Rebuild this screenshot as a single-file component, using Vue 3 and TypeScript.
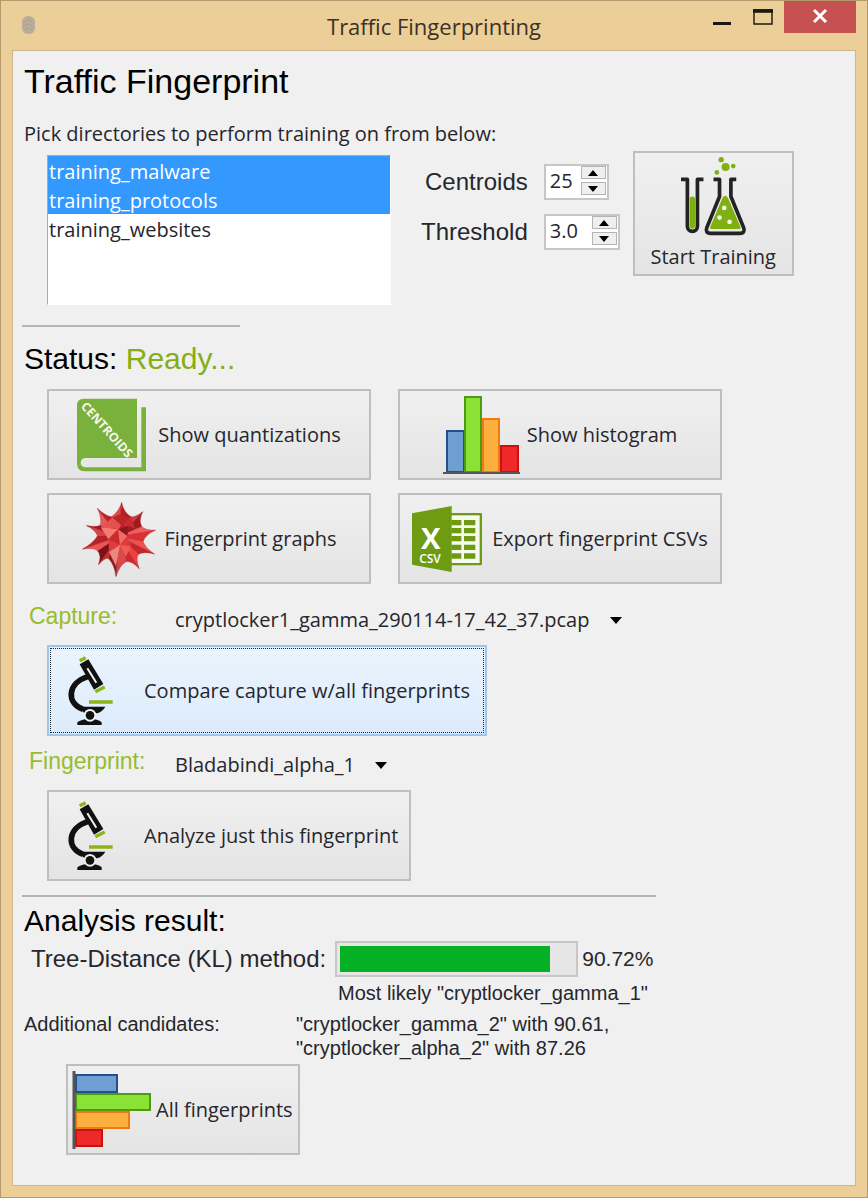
<script setup lang="ts">
import { ref } from 'vue'

interface Point { x: number; y: number }
interface Facet { d: string; fill: string }

const directories = ['training_malware', 'training_protocols', 'training_websites']
const selected = ref<string[]>(['training_malware', 'training_protocols'])
const centroids = ref(25)
const threshold = ref('3.0')
const captures = ['cryptlocker1_gamma_290114-17_42_37.pcap']
const capture = ref(captures[0])
const fingerprints = ['Bladabindi_alpha_1']
const fingerprint = ref(fingerprints[0])
const score = 90.72
const barFill = ref(90)

function stepCentroids(delta: number) {
  centroids.value = Math.max(1, Number(centroids.value) + delta)
}
function stepThreshold(delta: number) {
  threshold.value = Math.max(0, Number(threshold.value) + delta).toFixed(1)
}

// Spiked ball: every spike is a lit and a shaded half that narrow towards the tip.
const toPoints = (raw: number[][]): Point[] => raw.map(([x, y]) => ({ x, y }))
const hub: Point = { x: 115, y: 110 }
const tips = toPoints([[123, 7], [187, 35], [225, 91], [222, 163], [176, 207], [106, 231], [53, 195], [5, 148], [17, 77], [50, 25]])
const valleys = toPoints([[151, 50], [184, 80], [188, 125], [174, 164], [137, 186], [82, 176], [50, 153], [50, 108], [58, 76], [92, 50]])
const light = ['#e04845', '#d8393a', '#f0605c', '#ef5350', '#f0413f', '#d94a48', '#c92c2e', '#ee5552', '#d94142', '#e65a58']
const dark = ['#b41d22', '#9e1a1e', '#dc3034', '#c4262a', '#d0282c', '#8f1a1e', '#7c1014', '#b82226', '#a3181d', '#b52226']
const mix = (a: Point, b: Point, t: number): Point => ({ x: a.x + (b.x - a.x) * t, y: a.y + (b.y - a.y) * t })
const curve = (valley: Point, tip: Point): Point => mix(mix(valley, tip, 0.4), mix(hub, tip, 0.65), 0.5)
const facets: Facet[] = tips.flatMap((tip, i) => {
  const before = valleys[(i + valleys.length - 1) % valleys.length]
  const after = valleys[i]
  const a = curve(before, tip)
  const b = curve(after, tip)
  return [
    { d: `M${hub.x} ${hub.y}L${before.x} ${before.y}Q${a.x} ${a.y} ${tip.x} ${tip.y}Z`, fill: light[i] },
    { d: `M${hub.x} ${hub.y}L${after.x} ${after.y}Q${b.x} ${b.y} ${tip.x} ${tip.y}Z`, fill: dark[i] },
  ]
})
</script>

<template>
  <div class="window">
    <header class="titlebar">
      <svg class="app-icon" viewBox="0 0 14 20" aria-hidden="true">
        <rect x="0" y="1" width="13" height="18" rx="6" fill="#b8ad98" />
        <path d="M3 7q4-4 7 0M3 11q4-4 7 0M3 15q4-4 7 0" fill="none" stroke="#a89f8e" />
      </svg>
      <span class="title">Traffic Fingerprinting</span>
      <div class="controls">
        <button type="button" class="control" aria-label="Minimize">
          <svg width="20" height="18" viewBox="0 0 20 18"><path d="M1 15.5h18" stroke="#1c1812" stroke-width="3" /></svg>
        </button>
        <button type="button" class="control" aria-label="Maximize">
          <svg width="20" height="18" viewBox="0 0 20 18"><path d="M1 2h18v14H1z" fill="none" stroke="#1c1812" stroke-width="1.4" /><path d="M0 3h20" stroke="#1c1812" stroke-width="3.6" /></svg>
        </button>
        <button type="button" class="close" aria-label="Close">
          <svg width="16" height="14" viewBox="0 0 16 14"><path d="M2 1l12 12M14 1L2 13" stroke="#fff" stroke-width="3" /></svg>
        </button>
      </div>
    </header>

    <main class="client">
      <h1>Traffic Fingerprint</h1>
      <label class="hint" for="dirs">Pick directories to perform training on from below:</label>

      <section class="training">
        <select id="dirs" v-model="selected" class="dirs" multiple size="5">
          <option v-for="d in directories" :key="d" :value="d">{{ d }}</option>
        </select>
        <div class="params">
          <label for="centroids">Centroids</label>
          <div class="spin">
            <input id="centroids" v-model="centroids" class="narrow" type="text" inputmode="numeric" />
            <div class="arrows">
              <button type="button" aria-label="Increase centroids" @click="stepCentroids(1)"><svg width="10" height="6" viewBox="0 0 10 6"><path d="M0 6L5 0l5 6z" /></svg></button>
              <button type="button" aria-label="Decrease centroids" @click="stepCentroids(-1)"><svg width="10" height="6" viewBox="0 0 10 6"><path d="M0 0l5 6 5-6z" /></svg></button>
            </div>
          </div>
          <label for="threshold">Threshold</label>
          <div class="spin">
            <input id="threshold" v-model="threshold" class="wide" type="text" inputmode="decimal" />
            <div class="arrows">
              <button type="button" aria-label="Increase threshold" @click="stepThreshold(0.1)"><svg width="10" height="6" viewBox="0 0 10 6"><path d="M0 6L5 0l5 6z" /></svg></button>
              <button type="button" aria-label="Decrease threshold" @click="stepThreshold(-0.1)"><svg width="10" height="6" viewBox="0 0 10 6"><path d="M0 0l5 6 5-6z" /></svg></button>
            </div>
          </div>
        </div>
        <button type="button" class="btn start">
          <svg width="67" height="79" viewBox="0 0 200 236" aria-hidden="true">
            <g fill="none" stroke="#232323" stroke-width="11" stroke-linejoin="round">
              <path d="M3 67H22V207a15 15 0 0 0 30 0V67H70" />
              <path d="M100 67H118V118L80 211Q74 228 92 228H178Q196 228 190 211L152 118V67H168" />
            </g>
            <path d="M29 126a8 8 0 0 1 16 0V206a8 8 0 0 1-16 0z" fill="#7fb010" />
            <path d="M135 116q6 0 9 8L181 210q2 5-4 5H94q-6 0-4-5L126 124q3-8 9-8z" fill="#7fb010" />
            <g fill="#f1f1f1"><circle cx="132" cy="152" r="7" /><circle cx="118" cy="181" r="7" /><circle cx="148" cy="194" r="7" /></g>
            <g fill="#7fb010"><circle cx="123" cy="8" r="8" /><circle cx="136" cy="30" r="12" /><circle cx="159" cy="27" r="7" /><circle cx="110" cy="46" r="7" /></g>
          </svg>
          <span>Start Training</span>
        </button>
      </section>

      <hr class="short" />
      <h2>Status: <span class="ready">Ready...</span></h2>

      <section class="grid">
        <button type="button" class="btn">
          <svg class="book" width="70" height="74" viewBox="0 0 210 222" aria-hidden="true">
            <path d="M20 2H180V180H25a14 14 0 0 0 0 28H193V28H207V220H22Q0 220 0 196V22Q0 2 20 2Z" fill="#79b13c" />
            <text transform="translate(10 26) rotate(48)" font-family="Open Sans, sans-serif" font-weight="700" font-size="37" fill="#f4f8ee">CENTROIDS</text>
          </svg>
          <span>Show quantizations</span>
        </button>
        <button type="button" class="btn">
          <svg class="chart" width="77" height="78" viewBox="0 0 77 78" aria-hidden="true">
            <g stroke-width="2">
              <rect x="4" y="35" width="17" height="41" fill="#6f9fd2" stroke="#244f8c" />
              <rect x="22" y="1" width="16" height="75" fill="#8ae234" stroke="#4e9a16" />
              <rect x="40" y="23" width="16" height="53" fill="#fcaf3e" stroke="#f07a10" />
              <rect x="58" y="50" width="17" height="26" fill="#ef2929" stroke="#cc1010" />
            </g>
            <path d="M0 77h77" stroke="#555" stroke-width="2" />
          </svg>
          <span>Show histogram</span>
        </button>
        <button type="button" class="btn">
          <svg class="star" width="76" height="78" viewBox="0 0 230 235" aria-hidden="true">
            <path v-for="f in facets" :key="f.d" :d="f.d" :fill="f.fill" stroke="#a3222a" stroke-width="1" />
            <polygon points="112,88 144,77 140,108 152,140 118,135 85,157 83,118 60,82 90,84" fill="#df3b3b" />
            <polygon points="112,88 60,82 83,118" fill="#f37b76" />
            <polygon points="112,88 83,118 118,135" fill="#c62b2e" />
            <polygon points="112,88 140,108 118,135" fill="#f06a66" />
            <polygon points="112,88 144,77 140,108" fill="#8d181c" />
            <polygon points="118,135 85,157 106,200" fill="#f08580" />
            <polygon points="118,135 152,140 135,172" fill="#f25a56" />
            <polygon points="95,53 120,42 145,56 122,76" fill="#b8262a" />
            <polygon points="64,77 95,53 122,76 112,88" fill="#e4514f" />
            <polygon points="150,50 165,88 144,77 122,76" fill="#cc2b2e" />
          </svg>
          <span>Fingerprint graphs</span>
        </button>
        <button type="button" class="btn">
          <svg class="csv" width="70" height="66" viewBox="0 0 210 198" aria-hidden="true">
            <rect x="110" y="21" width="100" height="157" rx="4" fill="#6d9b12" />
            <rect x="110" y="28" width="93" height="143" fill="#f7faf0" />
            <g fill="#6d9b12">
              <path d="M118 42h30v16h-30zM118 66h30v16h-30zM118 90h30v16h-30zM118 116h30v16h-30zM118 142h30v16h-30z" />
              <path d="M156 42h34v16h-34zM156 66h34v16h-34zM156 90h34v16h-34zM156 116h34v16h-34zM156 142h34v16h-34z" />
              <path d="M0 22L119 0V198L0 176Z" />
            </g>
            <text x="56" y="128" text-anchor="middle" font-family="Open Sans, sans-serif" font-weight="700" font-size="88" fill="#fff">X</text>
            <text x="54" y="171" text-anchor="middle" font-family="Open Sans, sans-serif" font-weight="600" font-size="36" fill="#fff">CSV</text>
          </svg>
          <span>Export fingerprint CSVs</span>
        </button>
      </section>

      <div class="field">
        <label for="capture">Capture:</label>
        <div class="combo">
          <select id="capture" v-model="capture"><option v-for="c in captures" :key="c">{{ c }}</option></select>
          <svg width="12" height="7" viewBox="0 0 12 7" aria-hidden="true"><path d="M0 0h12L6 7z" /></svg>
        </div>
      </div>
      <button type="button" class="btn scope focused">
        <svg width="44" height="69" viewBox="0 0 132 207" aria-hidden="true">
          <path d="M56 62C-6 82 -8 142 42 160" fill="none" stroke="#111" stroke-width="17" />
          <path d="M32 25L58 10 103 84 75 101Z" fill="#111" />
          <path d="M55 37L82 80" stroke="#f2f2f2" stroke-width="6" />
          <path d="M32 14L50 5M79 107L107 93M60 138H131" stroke="#8cb51a" stroke-width="10" />
          <path d="M28 152H109Q100 168 84 172H46Z" fill="#111" />
          <path d="M25 207V199Q40 188 62 188Q86 188 98 199V207Z" fill="#111" />
          <circle cx="63" cy="178" r="19" fill="#f0f3f5" /><circle cx="63" cy="178" r="13" fill="#111" />
        </svg>
        <span>Compare capture w/all fingerprints</span>
      </button>

      <div class="field after">
        <label for="fingerprint">Fingerprint:</label>
        <div class="combo">
          <select id="fingerprint" v-model="fingerprint"><option v-for="f in fingerprints" :key="f">{{ f }}</option></select>
          <svg width="12" height="7" viewBox="0 0 12 7" aria-hidden="true"><path d="M0 0h12L6 7z" /></svg>
        </div>
      </div>
      <button type="button" class="btn scope">
        <svg width="44" height="69" viewBox="0 0 132 207" aria-hidden="true">
          <path d="M56 62C-6 82 -8 142 42 160" fill="none" stroke="#111" stroke-width="17" />
          <path d="M32 25L58 10 103 84 75 101Z" fill="#111" />
          <path d="M55 37L82 80" stroke="#f2f2f2" stroke-width="6" />
          <path d="M32 14L50 5M79 107L107 93M60 138H131" stroke="#8cb51a" stroke-width="10" />
          <path d="M28 152H109Q100 168 84 172H46Z" fill="#111" />
          <path d="M25 207V199Q40 188 62 188Q86 188 98 199V207Z" fill="#111" />
          <circle cx="63" cy="178" r="19" fill="#ececec" /><circle cx="63" cy="178" r="13" fill="#111" />
        </svg>
        <span>Analyze just this fingerprint</span>
      </button>

      <hr class="long" />
      <h2 class="result-title">Analysis result:</h2>
      <div class="method">
        <span id="method">Tree-Distance (KL) method:</span>
        <div class="bar" role="progressbar" aria-labelledby="method" :aria-valuenow="score">
          <div class="fill" :style="{ width: barFill + '%' }"></div>
        </div>
        <span class="percent">{{ score }}%</span>
      </div>
      <p class="likely">Most likely "cryptlocker_gamma_1"</p>
      <div class="candidates">
        <span>Additional candidates:</span>
        <p>"cryptlocker_gamma_2" with 90.61,<br />"cryptlocker_alpha_2" with 87.26</p>
      </div>
      <button type="button" class="btn all">
        <svg width="78" height="78" viewBox="0 0 78 78" aria-hidden="true">
          <g stroke-width="2">
            <rect x="3" y="4" width="41" height="17" fill="#6f9fd2" stroke="#244f8c" />
            <rect x="3" y="23" width="74" height="16" fill="#8ae234" stroke="#4e9a16" />
            <rect x="3" y="41" width="53" height="16" fill="#fcaf3e" stroke="#f07a10" />
            <rect x="3" y="59" width="26" height="16" fill="#ef2929" stroke="#cc1010" />
          </g>
          <path d="M1 0v78" stroke="#555" stroke-width="3" />
        </svg>
        <span>All fingerprints</span>
      </button>
    </main>
  </div>
</template>

<style>
body { margin: 0; }
</style>

<style scoped>
* { box-sizing: border-box; }
.window {
  display: flex;
  flex-direction: column;
  min-height: 100vh;
  padding: 0 11px 11px;
  border: 1px solid #b39a6c;
  background: #ebce98;
  color: #26262c;
  font: 20px/28px "Open Sans", "Noto Sans", sans-serif;
}
button, select, input { font: inherit; color: inherit; margin: 0; }
.titlebar {
  display: grid;
  grid-template-columns: 1fr auto 1fr;
  height: 49px;
}
.app-icon { width: 14px; height: 20px; margin: 14px 0 0 10px; }
.title { padding-top: 10px; font-size: 22px; line-height: 30px; color: #3a3226; }
.controls { display: flex; justify-content: flex-end; align-items: flex-start; }
.control { width: 41px; height: 32px; padding: 7px 0 0; border: 0; background: none; line-height: 0; display: flex; justify-content: center; align-items: flex-start; }
.close { width: 72px; height: 32px; padding: 0 0 2px; border: 0; background: #c75050; display: flex; justify-content: center; align-items: center; margin-left: 1px; }
.client {
  flex: 1;
  padding: 9px 11px;
  border: 1px solid #cdb68a;
  background: #f0f0f0;
}
h1, h2, p { margin: 0; font-weight: 400; }
h1, h2, .params label, .field label, .method, .likely, .candidates { font-family: "Liberation Sans", Arial, sans-serif; }
h1 { font-size: 34px; line-height: 42px; color: #000; }
h2 { font-size: 30px; line-height: 36px; color: #000; margin-top: 14px; }
.ready { color: #86ad14; }
.hint { display: block; margin-top: 18px; }
.training { display: flex; align-items: flex-start; margin: 3px 0 0 23px; }
.dirs {
  width: 344px;
  height: 150px;
  margin-top: 4px;
  padding: 0;
  border: 1px solid #fff;
  border-top-color: #aaa;
  border-left-color: #aaa;
  border-radius: 0;
  background: #fff;
  overflow: hidden;
  outline: 0;
}
.dirs option { padding: 2px 1px 0; min-height: 0; height: 29px; line-height: 27px; color: #26262c; }
.dirs option:checked { background: #3399ff linear-gradient(#3399ff, #3399ff); color: #fff; }
.params {
  display: grid;
  grid-template-columns: auto auto;
  gap: 14px 16px;
  margin: 13px 0 0 30px;
  align-items: center;
  justify-items: start;
}
.params label { font-size: 24px; line-height: 28px; justify-self: end; }
.spin { display: flex; height: 36px; border: 2px solid #c6c6c6; background: #fff; }
.spin input { padding: 0 0 2px 4px; border: 0; background: none; outline: 0; }
.narrow { width: 35px; }
.wide { width: 46px; }
.arrows { display: flex; flex-direction: column; justify-content: space-between; padding: 0 1px 3px 0; }
.arrows button { display: flex; align-items: center; justify-content: center; width: 25px; height: 13px; padding: 0; border: 1px solid #b4b4b4; background: #efefef; }
.btn {
  display: flex;
  align-items: center;
  justify-content: center;
  height: 91px;
  padding: 0 7px;
  border: 2px solid #bfbfbf;
  background: linear-gradient(#f0f0f0, #e4e4e4);
  white-space: nowrap;
}
.btn svg { flex: none; overflow: visible; }
.start { flex-direction: column; width: 161px; height: 125px; margin-left: 13px; justify-content: flex-start; padding: 4px 0 0; }
.start span { margin-top: 8px; line-height: 26px; }
hr { margin: 20px 0 0 -2px; height: 2px; border: 0; background: #b4b4b4; }
.short { width: 218px; }
.long { width: 634px; margin-top: 14px; }
.grid {
  display: grid;
  grid-template-columns: 324px 324px;
  gap: 13px 27px;
  margin: 12px 0 0 23px;
}
.book { margin-right: 11px; }
.chart { margin-right: 7px; }
.star { margin-right: 7px; }
.csv { margin-right: 10px; }
.field { display: flex; align-items: flex-start; height: 61px; padding: 18px 0 0 5px; }
.field.after { height: 54px; padding-top: 11px; }
.field label { width: 146px; font-size: 23px; line-height: 28px; color: #95bd2e; }
.combo { position: relative; margin-top: 4px; }
.combo select { padding: 0 32px 0 0; border: 0; background: none; appearance: none; outline: 0; }
.combo svg { position: absolute; right: 0; top: 11px; pointer-events: none; }
.scope { margin-left: 23px; padding: 0 11px 0 20px; }
.scope svg { margin-right: 31px; }
.focused {
  padding-right: 15px;
  border-color: #9cc6ee;
  background: linear-gradient(#ebf4fd, #dcebfb);
  outline: 1px dotted #222;
  outline-offset: -4px;
}
.result-title { margin-top: 6px; }
.method { display: flex; align-items: center; padding-left: 7px; margin-top: 2px; font-size: 24px; }
.bar { width: 243px; height: 36px; margin-left: 9px; padding: 3px; border: 2px solid #c6c6c6; background: #e6e6e6; }
.fill { height: 100%; background: #06b025; }
.percent { margin-left: 4px; font-size: 21px; }
.likely { margin: 3px 0 0 314px; line-height: 26px; }
.candidates { display: grid; grid-template-columns: 272px auto; line-height: 24px; margin-top: 6px; }
.all { margin: 4px 0 0 42px; padding: 0 5px; }
.all svg { margin-right: 5px; }
</style>
